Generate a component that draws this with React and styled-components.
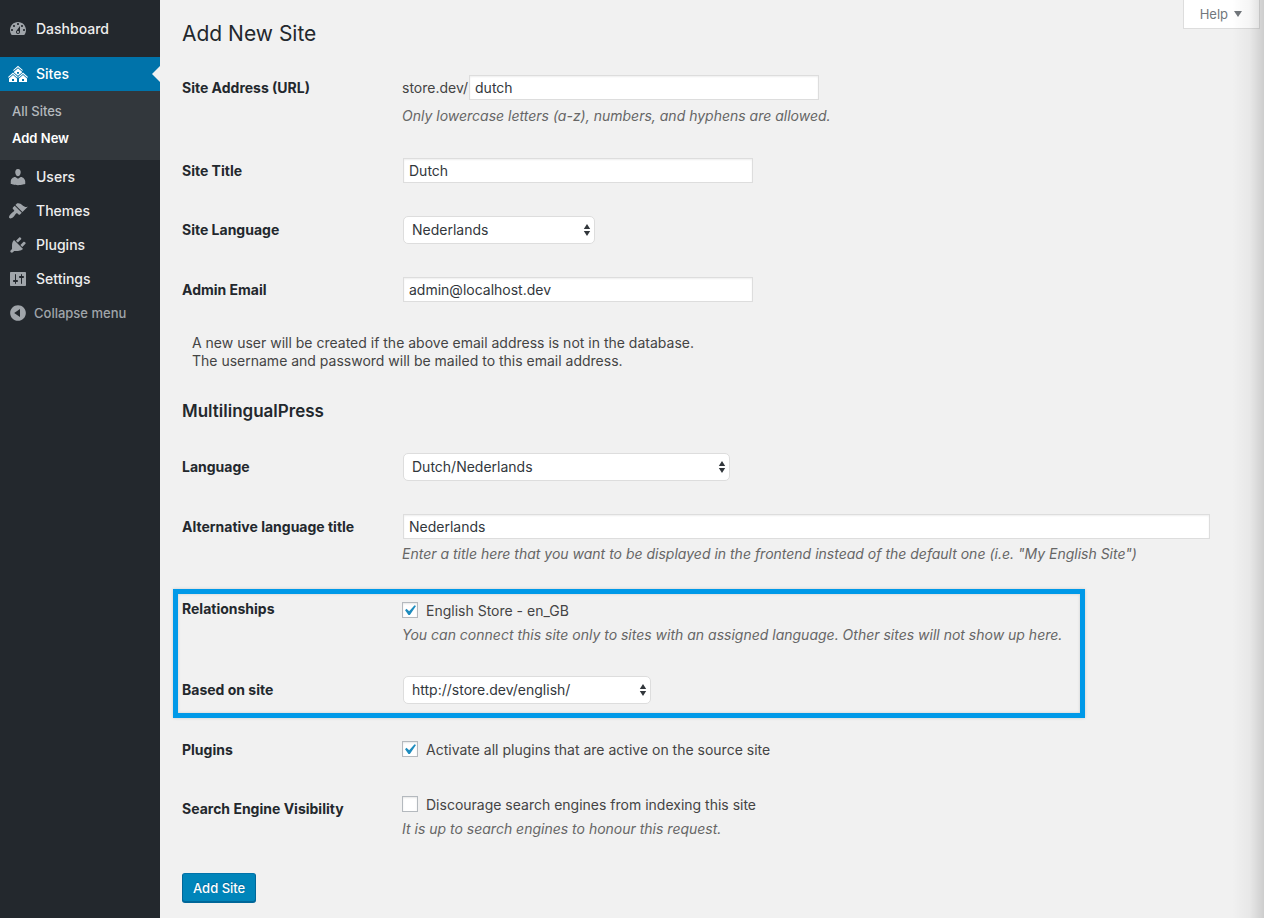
import { useState } from "react";
import styled, { createGlobalStyle } from "styled-components";

const menu = [
    {
        name: "Dashboard",
        icon: "M3.76 16h12.48c1.1-1.37 1.76-3.11 1.76-5 0-4.42-3.58-8-8-8s-8 3.58-8 8c0 1.89.66 3.63 1.76 5zM10 4c.55 0 1 .45 1 1s-.45 1-1 1-1-.45-1-1 .45-1 1-1zM6 6c.55 0 1 .45 1 1s-.45 1-1 1-1-.45-1-1 .45-1 1-1zm8 0c.55 0 1 .45 1 1s-.45 1-1 1-1-.45-1-1 .45-1 1-1zm-5.37 5.55L12 7v6c0 1.1-.9 2-2 2s-2-.9-2-2c0-.57.24-1.08.63-1.45zM4 10c.55 0 1 .45 1 1s-.45 1-1 1-1-.45-1-1 .45-1 1-1zm12 0c.55 0 1 .45 1 1s-.45 1-1 1-1-.45-1-1 .45-1 1-1zm-5 3c0-.55-.45-1-1-1s-1 .45-1 1 .45 1 1 1 1-.45 1-1z",
        separated: true
    },
    {
        name: "Sites",
        icon: "M14.27 6.87L10 3.14 5.73 6.87 5 6.14l5-4.38 5 4.38zM14 8.42l-4.05 3.43L6 8.38v-.74l4-3.5 4 3.5v.78zM11 9.7V8H9v1.7h2zm-1.73 4.03L5 10 .73 13.73 0 13l5-4.38L10 13zm10 0L15 10l-4.27 3.73L10 13l5-4.38L20 13zM5 11l4 3.5V18H1v-3.5zm10 0l4 3.5V18h-8v-3.5zm-9 6v-2H4v2h2zm10 0v-2h-2v2h2z",
        current: true,
        children: ["All Sites", "Add New"]
    },
    {
        name: "Users",
        icon: "M10 9.25c-2.27 0-2.73-3.44-2.73-3.44C7 4.02 7.82 2 9.97 2c2.16 0 2.98 2.02 2.71 3.81 0 0-.41 3.44-2.68 3.44zm0 2.57L12.72 10c2.39 0 4.52 2.33 4.52 4.53v2.49s-3.65 1.13-7.24 1.13c-3.65 0-7.24-1.13-7.24-1.13v-2.49c0-2.25 1.94-4.48 4.47-4.48z"
    },
    {
        name: "Themes",
        icon: "M14.48 11.06L7.41 3.99l1.5-1.5c.5-.56 2.3-.47 3.51.32 1.21.8 1.43 1.28 2.91 2.1 1.18.64 2.45 1.26 4.45.85zm-.71.71L6.7 4.7 4.93 6.47c-.39.39-.39 1.02 0 1.41l1.06 1.06c.39.39.39 1.03 0 1.42-.6.6-1.43 1.11-2.21 1.69-.35.26-.7.53-1.01.84C1.43 14.23.4 16.08 1.4 17.07c.99 1 2.84-.03 4.18-1.36.31-.31.58-.66.85-1.02.57-.78 1.08-1.61 1.69-2.21.39-.39 1.02-.39 1.41 0l1.06 1.06c.39.39 1.02.39 1.41 0z"
    },
    {
        name: "Plugins",
        icon: "M13.11 4.36L9.87 7.6 8 5.73l3.24-3.24c.35-.34 1.05-.2 1.56.32.52.51.66 1.21.31 1.55zm-8 1.77l.91-1.12 9.01 9.01-1.19.84c-.71.71-2.63 1.16-3.82 1.16H6.14L4.9 17.26c-.59.59-1.54.59-2.12 0-.59-.58-.59-1.53 0-2.12l1.24-1.24v-3.88c0-1.13.4-3.19 1.09-3.89zm7.26 3.97l3.24-3.24c.34-.35 1.04-.21 1.55.31.52.51.66 1.21.31 1.55l-3.24 3.25z"
    },
    {
        name: "Settings",
        icon: "M18 16V4c0-.55-.45-1-1-1H3c-.55 0-1 .45-1 1v12c0 .55.45 1 1 1h14c.55 0 1-.45 1-1zM8 11h1c.55 0 1 .45 1 1s-.45 1-1 1H8v1.5c0 .28-.22.5-.5.5s-.5-.22-.5-.5V13H6c-.55 0-1-.45-1-1s.45-1 1-1h1V5.5c0-.28.22-.5.5-.5s.5.22.5.5V11zm5-2h-1c-.55 0-1-.45-1-1s.45-1 1-1h1V5.5c0-.28.22-.5.5-.5s.5.22.5.5V7h1c.55 0 1 .45 1 1s-.45 1-1 1h-1v5.5c0 .28-.22.5-.5.5s-.5-.22-.5-.5V9z"
    }
];

const collapseIcon = "M10 2.16c4.33 0 7.84 3.51 7.84 7.84s-3.51 7.84-7.84 7.84S2.16 14.33 2.16 10 5.71 2.16 10 2.16zm2 11.72V6.12L6.18 9.97z";

const Icon = ({ path }) => (
    <IconSvg viewBox="0 0 20 20" aria-hidden="true">
        <path fillRule="evenodd" d={path} />
    </IconSvg>
);

const SelectField = ({ id, width, options }) => (
    <SelectWrapper $width={width}>
        <Select id={id}>
            {options.map((option) => (
                <option key={option}>{option}</option>
            ))}
        </Select>
        <Arrows viewBox="0 0 8 12" aria-hidden="true">
            <path d="M4 0l3.2 5H.8zM4 12l3.2-5H.8z" />
        </Arrows>
    </SelectWrapper>
);

const CheckField = ({ id, text, defaultChecked }) => {
    const [checked, setChecked] = useState(defaultChecked);

    return (
        <CheckLabel htmlFor={id}>
            <CheckBox>
                <CheckInput
                    id={id}
                    type="checkbox"
                    checked={checked}
                    onChange={(e) => setChecked(e.target.checked)}
                />
                {checked && (
                    <Tick viewBox="0 0 20 20" aria-hidden="true">
                        <path d="M14.83 4.89l1.34.94-5.81 8.38H9.02L5.78 9.67l1.34-1.25 2.57 2.4z" />
                    </Tick>
                )}
            </CheckBox>
            {text}
        </CheckLabel>
    );
};

const Sidebar = () => (
    <Nav>
        {menu.map((item) => (
            <MenuGroup key={item.name} $separated={item.separated}>
                <MenuLink href="#" $current={item.current}>
                    <Icon path={item.icon} />
                    {item.name}
                </MenuLink>
                {item.children && (
                    <Submenu>
                        {item.children.map((child) => (
                            <SubmenuLink key={child} href="#" $current={child === "Add New"}>
                                {child}
                            </SubmenuLink>
                        ))}
                    </Submenu>
                )}
            </MenuGroup>
        ))}
        <CollapseButton type="button">
            <Icon path={collapseIcon} />
            Collapse menu
        </CollapseButton>
    </Nav>
);

const App = () => {
    return (
        <>
            <GlobalStyle />
            <Page>
                <Sidebar />
                <Main>
                    <Header>
                        <Title>Add New Site</Title>
                        <HelpButton type="button">
                            Help
                            <HelpArrow viewBox="0 0 10 6" aria-hidden="true">
                                <path d="M1 0h8L5 6z" />
                            </HelpArrow>
                        </HelpButton>
                    </Header>
                    <form onSubmit={(e) => e.preventDefault()}>
                        <Row>
                            <Label htmlFor="address">Site Address (URL)</Label>
                            <Field>
                                <AddressLine>
                                    store.dev/
                                    <Input id="address" defaultValue="dutch" />
                                </AddressLine>
                                <Description>Only lowercase letters (a-z), numbers, and hyphens are allowed.</Description>
                            </Field>
                        </Row>
                        <Row>
                            <Label htmlFor="title">Site Title</Label>
                            <Field>
                                <Input id="title" defaultValue="Dutch" />
                            </Field>
                        </Row>
                        <Row>
                            <Label htmlFor="site-language">Site Language</Label>
                            <Field>
                                <SelectField id="site-language" width="192px" options={["Nederlands", "English (UK)"]} />
                            </Field>
                        </Row>
                        <Row>
                            <Label htmlFor="email">Admin Email</Label>
                            <Field>
                                <Input id="email" type="email" defaultValue="admin@localhost.dev" />
                            </Field>
                        </Row>
                        <Note>
                            A new user will be created if the above email address is not in the database.
                            <br />
                            The username and password will be mailed to this email address.
                        </Note>

                        <Subtitle>MultilingualPress</Subtitle>
                        <Row>
                            <Label htmlFor="language">Language</Label>
                            <Field>
                                <SelectField id="language" width="327px" options={["Dutch/Nederlands", "English"]} />
                            </Field>
                        </Row>
                        <Row>
                            <Label htmlFor="alternative">Alternative language title</Label>
                            <Field>
                                <Input id="alternative" defaultValue="Nederlands" $wide />
                                <Description>
                                    Enter a title here that you want to be displayed in the frontend instead of the default one (i.e. "My English Site")
                                </Description>
                            </Field>
                        </Row>
                        <Highlight>
                            <Row>
                                <Label as="span">Relationships</Label>
                                <Field $top="6px">
                                    <CheckField id="english-store" text="English Store - en_GB" defaultChecked />
                                    <Description>
                                        You can connect this site only to sites with an assigned language. Other sites will not show up here.
                                    </Description>
                                </Field>
                            </Row>
                            <Row>
                                <Label htmlFor="based-on">Based on site</Label>
                                <Field>
                                    <SelectField id="based-on" width="248px" options={["http://store.dev/english/", "http://store.dev/"]} />
                                </Field>
                            </Row>
                        </Highlight>
                        <Row>
                            <Label as="span">Plugins</Label>
                            <Field $top="4px">
                                <CheckField id="plugins" text="Activate all plugins that are active on the source site" defaultChecked />
                            </Field>
                        </Row>
                        <Row>
                            <Label as="span">Search Engine Visibility</Label>
                            <Field>
                                <CheckField id="visibility" text="Discourage search engines from indexing this site" defaultChecked={false} />
                                <Description>It is up to search engines to honour this request.</Description>
                            </Field>
                        </Row>
                        <SubmitButton type="submit">Add Site</SubmitButton>
                    </form>
                </Main>
            </Page>
        </>
    );
};

export default App;

const GlobalStyle = createGlobalStyle`
    *, *::after {
        box-sizing: border-box;
    }

    body {
        margin: 0;
        background: #F1F1F1;
        color: #444;
        font-family: Inter, Roboto, sans-serif;
        font-size: 14px;
        line-height: 20px;
    }

    input, select, button {
        font: inherit;
    }
`;

const Page = styled.div`
    position: relative;
    display: flex;
    min-height: 100vh;

    /* shade along the window edge */
    &::after {
        content: "";
        position: absolute;
        top: 0;
        right: 0;
        bottom: 0;
        width: 32px;
        background: linear-gradient(to right, rgba(0, 0, 0, 0), rgba(0, 0, 0, 0.04) 55%, rgba(0, 0, 0, 0.15));
        pointer-events: none;
    }
`;

const Nav = styled.nav`
    flex: 0 0 160px;
    padding-top: 12px;
    background: #23282D;
`;

const MenuGroup = styled.div`
    margin-bottom: ${({ $separated }) => ($separated ? "11px" : "0")};
`;

const MenuLink = styled.a`
    position: relative;
    display: flex;
    align-items: center;
    gap: 8px;
    height: 34px;
    padding-left: 8px;
    background: ${({ $current }) => ($current ? "#0073AA" : "transparent")};
    color: ${({ $current }) => ($current ? "#FFF" : "#EEE")};
    font-weight: 500;
    text-decoration: none;

    svg {
        fill: ${({ $current }) => ($current ? "#FFF" : "#A0A5AA")};
    }

    &::after {
        content: "";
        display: ${({ $current }) => ($current ? "block" : "none")};
        position: absolute;
        top: 9px;
        right: 0;
        border: 8px solid transparent;
        border-left: 0;
        border-right-color: #F1F1F1;
    }
`;

const IconSvg = styled.svg`
    flex: none;
    width: 20px;
    height: 20px;
    fill: #A0A5AA;
`;

const Submenu = styled.div`
    padding: 7px 0 8px;
    background: #32373C;
`;

const SubmenuLink = styled.a`
    display: block;
    padding-left: 12px;
    color: ${({ $current }) => ($current ? "#FFF" : "#B4B9BE")};
    font-size: 13px;
    font-weight: ${({ $current }) => ($current ? 600 : 500)};
    line-height: 27px;
    text-decoration: none;
`;

const CollapseButton = styled.button`
    display: flex;
    align-items: center;
    gap: 6px;
    width: 100%;
    height: 34px;
    padding: 0 0 0 8px;
    border: 0;
    background: none;
    color: #A0A5AA;
    font-size: 13px;
    font-weight: 500;
    cursor: pointer;
`;

const Main = styled.main`
    flex: 1;
    min-width: 0;
    padding: 0 4px 16px 22px;
`;

const Header = styled.header`
    display: flex;
    justify-content: space-between;
    align-items: flex-start;
    height: 59px;
`;

const Title = styled.h1`
    margin: 19px 0 0;
    color: #23282D;
    font-size: 21px;
    font-weight: 400;
    line-height: 30px;
`;

const HelpButton = styled.button`
    display: flex;
    align-items: center;
    gap: 5px;
    height: 29px;
    padding: 0 16px;
    border: 1px solid #DDD;
    border-top: 0;
    background: #FFF;
    color: #72777C;
    font-size: 13px;
    cursor: pointer;
`;

const HelpArrow = styled.svg`
    width: 10px;
    height: 6px;
    fill: #72777C;
`;

const Row = styled.div`
    display: grid;
    grid-template-columns: 210px minmax(0, 1fr);
    column-gap: 10px;
    padding: 15px 26px 15px 0;
`;

const Label = styled.label`
    padding-top: 5px;
    color: #23282D;
    font-weight: 700;
    line-height: 18px;
`;

const Field = styled.div`
    min-height: 29px;
    padding-top: ${({ $top }) => $top || "0"};
`;

const Input = styled.input`
    display: block;
    width: ${({ $wide }) => ($wide ? "97%" : "350px")};
    height: 25px;
    margin: 1px;
    padding: 0 5px;
    border: 1px solid #DDD;
    background: #FFF;
    box-shadow: inset 0 1px 2px rgba(0, 0, 0, 0.07);
    color: #32373C;
`;

const AddressLine = styled.div`
    display: flex;
    align-items: center;
    color: #444;
`;

const Description = styled.p`
    margin: 4px 0 1px;
    color: #666;
    font-style: italic;
    line-height: 21px;
`;

const SelectWrapper = styled.div`
    position: relative;
    width: ${({ $width }) => $width};
    margin: 0 0 2px 1px;
`;

const Select = styled.select`
    display: block;
    width: 100%;
    height: 28px;
    padding: 0 24px 0 8px;
    border: 1px solid #DDD;
    border-radius: 5px;
    background: #FFF;
    color: #32373C;
    appearance: none;
`;

const Arrows = styled.svg`
    position: absolute;
    top: 8px;
    right: 4px;
    width: 8px;
    height: 12px;
    fill: #32373C;
    pointer-events: none;
`;

const CheckLabel = styled.label`
    display: flex;
    align-items: center;
    gap: 8px;
    width: fit-content;

    & + ${Description} {
        margin-top: 3px;
    }
`;

const CheckBox = styled.span`
    position: relative;
    display: block;
    width: 16px;
    height: 16px;
    margin-bottom: 2px;
`;

const CheckInput = styled.input`
    display: block;
    width: 16px;
    height: 16px;
    margin: 0;
    border: 1px solid #B4B9BE;
    background: #FFF;
    box-shadow: inset 0 1px 2px rgba(0, 0, 0, 0.1);
    appearance: none;
`;

const Tick = styled.svg`
    position: absolute;
    top: -2px;
    left: -3px;
    width: 21px;
    height: 21px;
    fill: #1E8CBE;
    pointer-events: none;
`;

const Note = styled.p`
    margin: 0;
    padding: 14px 10px 0;
    line-height: 18px;
`;

const Subtitle = styled.h2`
    margin: 30px 0 16px;
    color: #23282D;
    font-size: 17px;
    font-weight: 600;
    line-height: 22px;
`;

const Highlight = styled.div`
    position: relative;

    /* marker frame drawn over the rows */
    &::after {
        content: "";
        position: absolute;
        top: 9px;
        bottom: 3px;
        left: -9px;
        width: 912px;
        border: 5px solid #0099E8;
        box-shadow: 0 0 3px rgba(0, 0, 0, 0.15), inset 0 0 3px rgba(0, 0, 0, 0.15);
        pointer-events: none;
    }
`;

const SubmitButton = styled.button`
    display: block;
    height: 29px;
    margin-top: 18px;
    padding: 0 10px;
    border: 1px solid #006799;
    border-color: #0073AA #006799 #006799;
    border-radius: 3px;
    background: #0085BA;
    box-shadow: 0 1px 0 #006799;
    color: #FFF;
    font-size: 13px;
    font-weight: 500;
    text-shadow: 0 -1px 1px #006799;
    cursor: pointer;
`;
